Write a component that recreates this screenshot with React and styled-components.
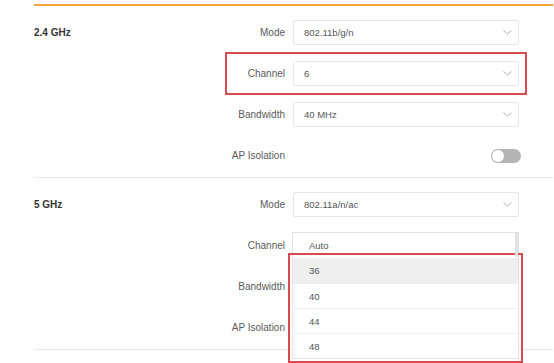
import React from 'react';
import styled, { createGlobalStyle } from 'styled-components';

const GlobalStyle = createGlobalStyle`
	html, body {
		margin: 0;
		padding: 0;
		background: #fff;
		font-family: "Liberation Sans", Arial, sans-serif;
	}
`;

const Page = styled.div`
	width: 554px;
	height: 363px;
	overflow: hidden;
	padding: 4px 1px 0 34px;
	box-sizing: border-box;
`;

const Panel = styled.div`
	border-top: 2px solid #eea33f;
`;

const Section = styled.div`
	display: flex;
	padding: 6px 0 1px;
	border-bottom: 1px solid #e8e8e8;
`;

const SectionTitle = styled.div`
	width: 192px;
	height: 41px;
	display: flex;
	align-items: center;
	font-size: 10px;
	font-weight: bold;
	color: #333;
`;

const Fields = styled.div`
	display: flex;
	flex-direction: column;
`;

const Field = styled.div`
	display: flex;
	align-items: center;
	width: 300px;
	height: 41px;
	box-sizing: border-box;
	padding-right: 7px;
	outline: ${(p) => (p.$marked ? '2px solid #d84a4c' : 'none')};
	outline-offset: -1px;
`;

const Label = styled.div`
	width: 59px;
	margin-right: 8px;
	text-align: right;
	font-size: 10px;
	color: #5a5a5a;
	white-space: nowrap;
`;

const Control = styled.div`
	position: relative;
	width: 226px;
	height: 25px;
	display: flex;
	align-items: center;
`;

const SelectBox = styled.div`
	flex: 1;
	height: 25px;
	box-sizing: border-box;
	border: 1px solid #e6e6e6;
	border-radius: 2px;
	display: flex;
	align-items: center;
	justify-content: space-between;
	padding: 0 6px 0 10px;
	font-size: 9.5px;
	color: #555;
`;

const Toggle = styled.div`
	margin-left: auto;
	margin-right: -2px;
	width: 30px;
	height: 14px;
	border-radius: 7px;
	background: #b4b4b4;
	position: relative;

	&:before {
		content: "";
		position: absolute;
		left: 0;
		top: 0;
		width: 12px;
		height: 12px;
		border-radius: 50%;
		background: #fff;
		border: 1px solid #b4b4b4;
	}
`;

const Menu = styled.div`
	position: absolute;
	top: -1px;
	left: -1px;
	width: 227px;
	background: #fff;
	border: 1px solid #e3e3e3;
	box-sizing: border-box;
	z-index: 2;
`;

const Thumb = styled.div`
	position: absolute;
	top: 0;
	right: 0;
	width: 3px;
	height: 24px;
	background: #e2e2e2;
`;

const MenuGroup = styled.div`
	outline: ${(p) => (p.$marked ? '2px solid #d84a4c' : 'none')};
	outline-offset: 3px;
`;

const MenuItem = styled.div`
	height: 25px;
	box-sizing: border-box;
	display: flex;
	align-items: center;
	padding-left: 16px;
	font-size: 9.5px;
	color: #555;
	background: ${(p) => (p.$active ? '#efefef' : '#fff')};
	border-top: ${(p) => (p.$first ? 'none' : '1px solid #efefef')};
`;

const Chevron = () => (
	<svg width="9" height="5" viewBox="0 0 9 5">
		<polyline points="0.5,0.5 4.5,4 8.5,0.5" fill="none" stroke="#aaa" strokeWidth="0.9" />
	</svg>
);

const Select = ({ value }) => (
	<SelectBox>
		<span>{value}</span>
		<Chevron />
	</SelectBox>
);

const sections = [
	{
		title: '2.4 GHz',
		mode: '802.11b/g/n',
		channel: '6',
		bandwidth: '40 MHz',
	},
	{
		title: '5 GHz',
		mode: '802.11a/n/ac',
		channel: 'Auto',
		bandwidth: '80 MHz',
		open: true,
	},
];

const channels5 = ['36', '40', '44', '48'];

const App = () => (
	<>
		<GlobalStyle />
		<Page>
			<Panel>
				{sections.map((s) => (
					<Section key={s.title}>
						<SectionTitle>{s.title}</SectionTitle>
						<Fields>
							<Field>
								<Label>Mode</Label>
								<Control><Select value={s.mode} /></Control>
							</Field>
							<Field $marked={!s.open}>
								<Label>Channel</Label>
								<Control>
									{s.open ? (
										<Menu>
											<Thumb />
											<MenuItem $first>{s.channel}</MenuItem>
											<MenuGroup $marked>
												{channels5.map((c, i) => (
													<MenuItem key={c} $active={i === 0} $first={i === 0}>{c}</MenuItem>
												))}
											</MenuGroup>
										</Menu>
									) : (
										<Select value={s.channel} />
									)}
								</Control>
							</Field>
							<Field>
								<Label>Bandwidth</Label>
								<Control>{!s.open && <Select value={s.bandwidth} />}</Control>
							</Field>
							<Field>
								<Label>AP Isolation</Label>
								<Control>{!s.open && <Toggle />}</Control>
							</Field>
						</Fields>
					</Section>
				))}
			</Panel>
		</Page>
	</>
);

export default App;
